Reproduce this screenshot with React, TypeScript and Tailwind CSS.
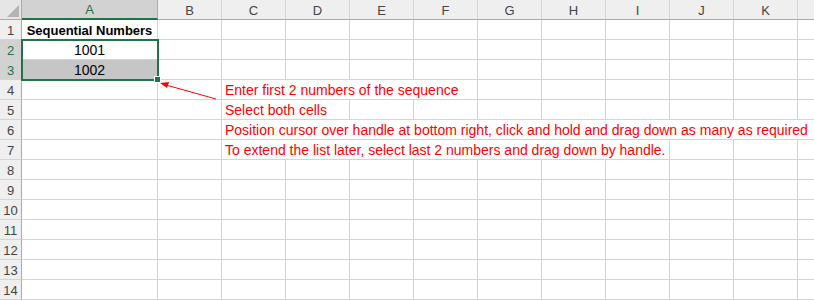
const cols = ["A", "B", "C", "D", "E", "F", "G", "H", "I", "J", "K", "L"];
const rows = Array.from({ length: 14 }, (_, i) => i + 1);

// notes start in column C and run over the cells to their right
const notes: Record<number, { text: string; span: number }> = {
  4: { text: "Enter first 2 numbers of the sequence", span: 4 },
  5: { text: "Select both cells", span: 2 },
  6: {
    text: "Position cursor over handle at bottom right, click and hold and drag down as many as required",
    span: 10,
  },
  7: { text: "To extend the list later, select last 2 numbers and drag down by handle.", span: 7 },
};

const spanClass: Record<number, string> = {
  2: "col-span-2",
  4: "col-span-4",
  7: "col-span-7",
  10: "col-span-10",
};

const cell = "h-5 border-r border-b border-[#d4d4d4] bg-white";

const App = () => {
  return (
    <div className="relative w-[814px] h-[300px] overflow-hidden bg-white font-['Liberation_Sans',Arial,sans-serif] text-[14px] text-black">
      <div className="grid grid-cols-[22px_136px_repeat(11,64px)] grid-rows-[repeat(15,20px)]">
        {/* corner */}
        <div className="relative h-5 bg-[#e6e6e6] border-r border-b border-[#ababab]">
          <svg className="absolute right-[2px] bottom-[2px]" width="12" height="12">
            <polygon points="12,0 12,12 0,12" fill="#b4b4b4" />
          </svg>
        </div>
        {cols.map((c) =>
          c === "A" ? (
            <div
              key={c}
              className="h-5 flex items-center justify-center pt-[2px] bg-[#d2d2d2] border-r border-[#ababab] border-b-2 border-b-[#217346] text-[13px] text-[#217346]"
            >
              {c}
            </div>
          ) : (
            <div
              key={c}
              className="h-5 flex items-center justify-center pt-[2px] bg-[#efefef] border-r border-b border-r-[#d4d4d4] border-b-[#ababab] text-[13px] text-[#444]"
            >
              {/* L sits past the window edge, its letter is not visible */}
              {c === "L" ? "" : c}
            </div>
          )
        )}

        {rows.map((r) => {
          const selected = r === 2 || r === 3;
          const note = notes[r];
          return [
            <div
              key={`h${r}`}
              className={`h-5 flex items-center justify-center pt-[2px] border-r border-b border-r-[#ababab] border-b-[#d4d4d4] text-[13px] ${
                selected ? "bg-[#d2d2d2] text-[#217346]" : "bg-[#efefef] text-[#444]"
              }`}
            >
              {r}
            </div>,
            <div
              key={`a${r}`}
              className={`h-5 border-r border-b border-[#d4d4d4] flex items-center justify-center pt-[2px] whitespace-nowrap ${
                r === 1 ? "font-bold text-[13px]" : ""
              } ${r === 3 ? "bg-[#c6c6c6]" : "bg-white"}`}
            >
              {r === 1 ? "Sequential Numbers" : r === 2 ? "1001" : r === 3 ? "1002" : ""}
            </div>,
            <div key={`b${r}`} className={cell} />,
            ...(note
              ? [
                  <div
                    key={`c${r}`}
                    className={`${cell} ${spanClass[note.span]} flex items-center pl-[3px] pt-[2px] whitespace-nowrap text-[#ff0000]`}
                  >
                    {note.text}
                  </div>,
                  ...cols.slice(2 + note.span).map((c) => <div key={`${c}${r}`} className={cell} />),
                ]
              : cols.slice(2).map((c) => <div key={`${c}${r}`} className={cell} />)),
          ];
        })}
      </div>

      {/* selection around A2:A3 */}
      <div className="absolute left-[21px] top-[39px] w-[138px] h-[42px] border-2 border-[#217346] pointer-events-none" />
      <div className="absolute left-[154px] top-[76px] w-[7px] h-[7px] bg-[#217346] border border-white" />

      {/* arrow */}
      <svg className="absolute left-0 top-0" width="814" height="300">
        <line x1="216" y1="99" x2="166" y2="85" stroke="#ff0000" strokeWidth="1" />
        <polygon points="160,83 169,82 167,88" fill="#ff0000" />
      </svg>
    </div>
  );
};

export default App;
